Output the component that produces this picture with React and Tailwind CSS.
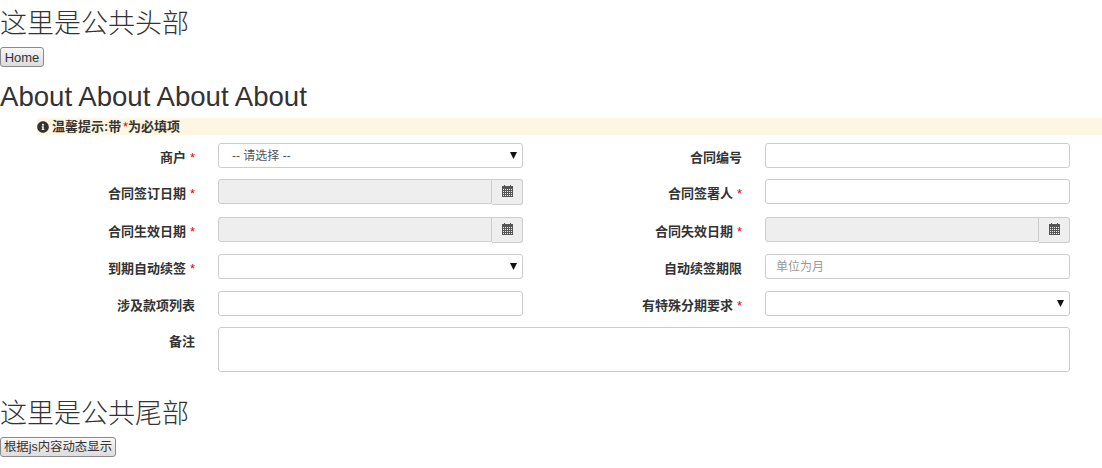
import React from 'react';
import { FaInfoCircle } from 'react-icons/fa';

const CJK = 'font-["Liberation_Sans","Noto_Sans_CJK_SC",sans-serif]';
const inputCls = 'block w-full h-[25px] rounded-[3px] border border-[#ccc] bg-white px-[10px] text-[12px] text-[#555] placeholder:text-[#999] outline-none';
const btnCls = 'mt-[8px] block h-[20px] rounded-[3px] border border-[#8a8a8a] bg-gradient-to-b from-[#f8f8f8] to-[#dcdcdc] leading-none';

function CalendarIcon() {
    const cells = [];
    for (let r = 0; r < 4; r++) {
        for (let c = 0; c < 5; c++) {
            cells.push(<rect key={`${r}-${c}`} x={1 + c * 2} y={4 + r * 2} width="1" height="1" fill="#eee" />);
        }
    }
    return (
        <svg width="11" height="12" viewBox="0 0 11 12" shapeRendering="crispEdges">
            <rect x="2" y="0" width="1" height="1" fill="#555" />
            <rect x="8" y="0" width="1" height="1" fill="#555" />
            <rect x="0" y="1" width="11" height="11" fill="#555" />
            {cells}
        </svg>
    );
}

function Label({ children, required, className = '' }) {
    return (
        <label className={`shrink-0 pt-[6px] text-right text-[13px] leading-[17px] font-bold text-[#333] ${className}`}>
            {children}
            {required && <span className="ml-[4px] font-normal text-[#e00]">*</span>}
        </label>
    );
}

function DateInput() {
    return (
        <div className="flex w-full items-start">
            <input readOnly className="h-[25px] min-w-0 flex-1 rounded-l-[3px] border border-[#ccc] bg-[#eee] px-3 outline-none" />
            <span className="flex h-[26px] w-[31px] shrink-0 items-center justify-center rounded-r-[3px] border border-l-0 border-[#ccc] bg-[#eee] pb-[2px]">
                <CalendarIcon />
            </span>
        </div>
    );
}

function Select({ children }) {
    return (
        <div className="relative">
            <select className="block h-[25px] w-full appearance-none rounded-[3px] border border-[#ccc] bg-white pl-[13px] pr-1 text-[12px] text-[#555] outline-none">
                {children}
            </select>
            <svg className="pointer-events-none absolute right-[6px] top-[9px]" width="7" height="7" viewBox="0 0 7 7">
                <path d="M0 0H7L3.5 7Z" fill="#111" />
            </svg>
        </div>
    );
}

function Row({ left, right, className = '' }) {
    return (
        <div className={`flex items-start ${className}`}>
            <Label required={left.required} className="w-[195px]">{left.label}</Label>
            <div className="ml-[23px] w-[305px] shrink-0">{left.control}</div>
            <Label required={right.required} className="w-[219px]">{right.label}</Label>
            <div className="ml-[23px] w-[305px] shrink-0">{right.control}</div>
        </div>
    );
}

export default function App() {
    return (
        <div className={`h-[468px] w-[1102px] overflow-hidden bg-white text-[#333] ${CJK}`}>
            <h2 className="pt-[9px] text-[27px] leading-[30px] font-light">这里是公共头部</h2>
            <button className={`${btnCls} w-[44px] text-[13px]`}>Home</button>
            <h2 className="mt-[14px] text-[27.6px] leading-[32px] font-light">About About About About</h2>

            <div className="mt-[5px] ml-[37px] flex h-[17px] items-center bg-[#fcf6e3] text-[13px] font-bold">
                <FaInfoCircle className="mr-[3px] text-[12px]" />
                <span>温馨提示:带 <span className="-ml-[2px] font-normal text-[#e00]">*</span>为必填项</span>
            </div>

            <div className="mt-[8px]">
                <Row
                    className="mb-[11px]"
                    left={{ label: '商户', required: true, control: <Select><option>-- 请选择 --</option></Select> }}
                    right={{ label: '合同编号', control: <input className={inputCls} /> }}
                />
                <Row
                    className="mb-[12px]"
                    left={{ label: '合同签订日期', required: true, control: <DateInput /> }}
                    right={{ label: '合同签署人', required: true, control: <input className={inputCls} /> }}
                />
                <Row
                    className="mb-[11px]"
                    left={{ label: '合同生效日期', required: true, control: <DateInput /> }}
                    right={{ label: '合同失效日期', required: true, control: <DateInput /> }}
                />
                <Row
                    className="mb-[12px]"
                    left={{ label: '到期自动续签', required: true, control: <Select><option></option></Select> }}
                    right={{ label: '自动续签期限', control: <input className={inputCls} placeholder="单位为月" /> }}
                />
                <Row
                    className="mb-[11px]"
                    left={{ label: '涉及款项列表', control: <input className={inputCls} /> }}
                    right={{ label: '有特殊分期要求', required: true, control: <Select><option></option></Select> }}
                />
                <div className="flex items-start">
                    <Label className="w-[195px]">备注</Label>
                    <textarea className="ml-[23px] block h-[45px] w-[852px] shrink-0 resize-none rounded-[3px] border border-[#ccc] px-3 py-1 outline-none" />
                </div>
            </div>

            <h2 className="mt-[27px] text-[27px] leading-[30px] font-light">这里是公共尾部</h2>
            <button className={`${btnCls} w-[116px] text-[12.4px]`}>根据js内容动态显示</button>
        </div>
    );
}
